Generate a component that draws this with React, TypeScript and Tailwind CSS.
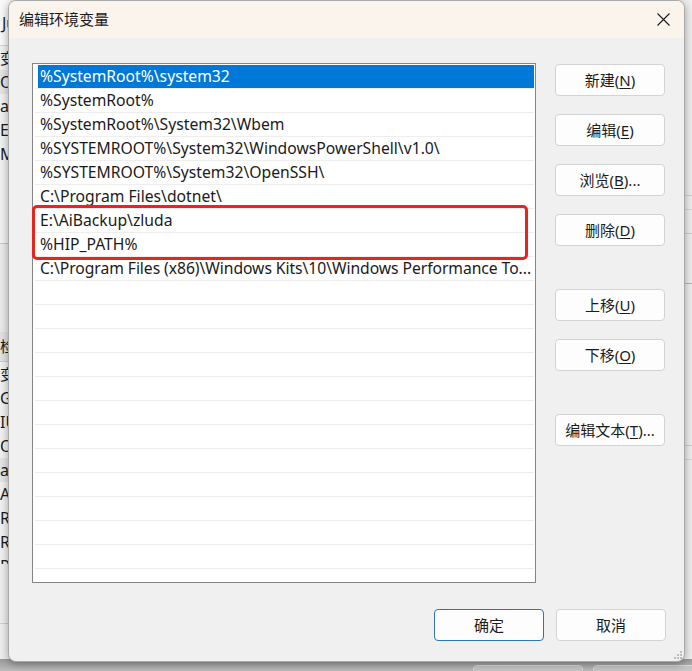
import React from "react";

const rows = [
  "%SystemRoot%\\system32",
  "%SystemRoot%",
  "%SystemRoot%\\System32\\Wbem",
  "%SYSTEMROOT%\\System32\\WindowsPowerShell\\v1.0\\",
  "%SYSTEMROOT%\\System32\\OpenSSH\\",
  "C:\\Program Files\\dotnet\\",
  "E:\\AiBackup\\zluda",
  "%HIP_PATH%",
  "C:\\Program Files (x86)\\Windows Kits\\10\\Windows Performance To...",
];

const TOTAL_ROWS = 21;

function Btn({
  children,
  primary,
}: {
  children: React.ReactNode;
  primary?: boolean;
}) {
  return (
    <div
      className={
        "w-[110px] h-[32px] flex items-center justify-center rounded-[4px] bg-[#fdfdfd] text-[15px] text-[#1b1b1b] border " +
        (primary ? "border-[#2f72b6]" : "border-[#d3d3d3]")
      }
    >
      {children}
    </div>
  );
}

function U({ c }: { c: string }) {
  return <span className="underline underline-offset-[2px]">{c}</span>;
}

export default function App() {
  const all: (string | null)[] = [];
  for (let i = 0; i < TOTAL_ROWS; i++) all.push(i < rows.length ? rows[i] : null);

  return (
    <div className="relative w-[692px] h-[671px] overflow-hidden bg-[#efefef] font-['Noto_Sans','Noto_Sans_CJK_SC',sans-serif] text-[#1b1b1b]">
      {/* background window, left strip */}
      <div className="absolute left-0 top-0 w-[10px] h-[662px] overflow-hidden text-[16px] leading-none whitespace-nowrap">
        <div className="h-[46px] bg-[#fafafa] flex items-center pl-[2px] border-b border-[#d6d6d6]">Ju</div>
        <div className="h-[24px] bg-[#f3f3f3] flex items-center text-[15px]">变量</div>
        <div className="h-[24px] bg-[#e6e6e6] flex items-center">Or</div>
        <div className="h-[24px] bg-[#f3f3f3] flex items-center">a</div>
        <div className="h-[24px] bg-[#f3f3f3] flex items-center">E</div>
        <div className="h-[24px] bg-[#f3f3f3] flex items-center">M</div>
        <div className="h-[78px] bg-[#f3f3f3] border-b border-[#c8c8c8]"></div>
        <div className="h-[88px] bg-[#ececec]"></div>
        <div className="h-[30px] bg-[#e4e4e4] flex items-center text-[15px] border-b border-[#cfcfcf]">检查</div>
        <div className="h-[24px] bg-[#f3f3f3] flex items-center text-[15px]">变量</div>
        <div className="h-[24px] bg-[#f3f3f3] flex items-center">G</div>
        <div className="h-[24px] bg-[#f3f3f3] flex items-center">IU</div>
        <div className="h-[24px] bg-[#f3f3f3] flex items-center">OS</div>
        <div className="h-[24px] bg-[#e6e6e6] flex items-center">a</div>
        <div className="h-[24px] bg-[#f3f3f3] flex items-center">A</div>
        <div className="h-[24px] bg-[#f3f3f3] flex items-center">R</div>
        <div className="h-[24px] bg-[#f3f3f3] flex items-center">R</div>
        <div className="h-[10px] bg-[#f3f3f3] overflow-hidden pt-[4px]">P</div>
        <div className="h-[60px] bg-[#efefef] border-b border-[#d0d0d0]"></div>
      </div>
      {/* background window, right strip */}
      <div className="absolute right-0 top-0 w-[8px] h-[662px] bg-[#efefef]">
        <div className="h-[196px] border-b border-[#d0d0d0]"></div>
        <div className="h-[14px] border-b border-[#d8d8d8]"></div>
        <div className="h-[24px] border-b border-[#d0d0d0]"></div>
        <div className="h-[50px] border-b border-[#b8b8b8]"></div>
        <div className="h-[162px] border-b border-[#d0d0d0]"></div>
        <div className="h-[14px] border-b border-[#d8d8d8]"></div>
      </div>
      {/* bottom strip */}
      <div className="absolute left-0 bottom-0 w-[692px] h-[12px] bg-gradient-to-b from-[#9a9a9a] to-[#bdbdbd]">
        <div className="absolute left-[473px] top-[6px] w-[110px] h-[12px] rounded-[4px] border border-[#d8d8d8] bg-[#c6c6c6]"></div>
        <div className="absolute left-[593px] top-[6px] w-[110px] h-[12px] rounded-[4px] border border-[#d8d8d8] bg-[#c6c6c6]"></div>
      </div>

      {/* dialog */}
      <div className="absolute left-[8px] top-0 w-[677px] h-[662px] rounded-[8px] border border-[#a9a9a9] bg-[#f0f0f0] overflow-hidden shadow-[0_2px_10px_rgba(0,0,0,0.35)] flex flex-col">
        {/* title bar */}
        <div className="h-[37px] shrink-0 bg-[#faf4ec] flex items-center justify-between pl-[10px] pr-[14px]">
          <span className="text-[15px] text-[#1b1b1b]">编辑环境变量</span>
          <svg width="13" height="13" viewBox="0 0 13 13">
            <path d="M0.5 0.5 L12.5 12.5 M12.5 0.5 L0.5 12.5" stroke="#1b1b1b" strokeWidth="1.1" />
          </svg>
        </div>
        {/* body */}
        <div className="flex flex-col pl-[23px] pt-[25px]">
          <div className="flex">
            <div className="relative w-[504px] h-[520px] border border-[#858585] bg-white pt-[1px] pl-[2px] pr-[1px]">
              {all.map((r, i) =>
                i === 0 ? (
                  <div key={i} className="h-[24px] border-b border-[#eeeeee] pl-[3px]">
                    <div className="h-[23px] bg-[#0078d7] text-white text-[15.7px] flex items-center pl-[2px] whitespace-nowrap overflow-hidden">
                      {r}
                    </div>
                  </div>
                ) : (
                  <div
                    key={i}
                    className={
                      "h-[24px] border-b border-[#eeeeee] pl-[5px] text-[15.7px] flex items-center whitespace-nowrap overflow-hidden" +
                      (i === 8 ? " tracking-[-0.06px]" : "")
                    }
                  >
                    {r}
                  </div>
                )
              )}
              <div className="absolute left-[-1px] top-[141px] w-[496px] h-[55px] border-[3px] border-[#e8241c] rounded-[5px]"></div>
            </div>
            <div className="ml-[19px] pt-[1px] flex flex-col">
              <Btn>
                新建(<U c="N" />)
              </Btn>
              <div className="mt-[18px]">
                <Btn>
                  编辑(<U c="E" />)
                </Btn>
              </div>
              <div className="mt-[18px]">
                <Btn>
                  浏览(<U c="B" />)...
                </Btn>
              </div>
              <div className="mt-[18px]">
                <Btn>
                  删除(<U c="D" />)
                </Btn>
              </div>
              <div className="mt-[43px]">
                <Btn>
                  上移(<U c="U" />)
                </Btn>
              </div>
              <div className="mt-[18px]">
                <Btn>
                  下移(<U c="O" />)
                </Btn>
              </div>
              <div className="mt-[43px]">
                <Btn>
                  编辑文本(<U c="T" />)...
                </Btn>
              </div>
            </div>
          </div>
          <div className="flex justify-end gap-[12px] mt-[26px] pr-[18px]">
            <Btn primary>确定</Btn>
            <Btn>取消</Btn>
          </div>
        </div>
        {/* resize grip */}
        <svg width="8" height="8" viewBox="0 0 8 8" className="absolute right-[2px] bottom-[2px]">
          <rect x="6" y="0" width="2" height="2" fill="#bdbdbd" />
          <rect x="3" y="3" width="2" height="2" fill="#bdbdbd" />
          <rect x="6" y="3" width="2" height="2" fill="#bdbdbd" />
          <rect x="0" y="6" width="2" height="2" fill="#bdbdbd" />
          <rect x="3" y="6" width="2" height="2" fill="#bdbdbd" />
          <rect x="6" y="6" width="2" height="2" fill="#bdbdbd" />
        </svg>
      </div>
    </div>
  );
}
